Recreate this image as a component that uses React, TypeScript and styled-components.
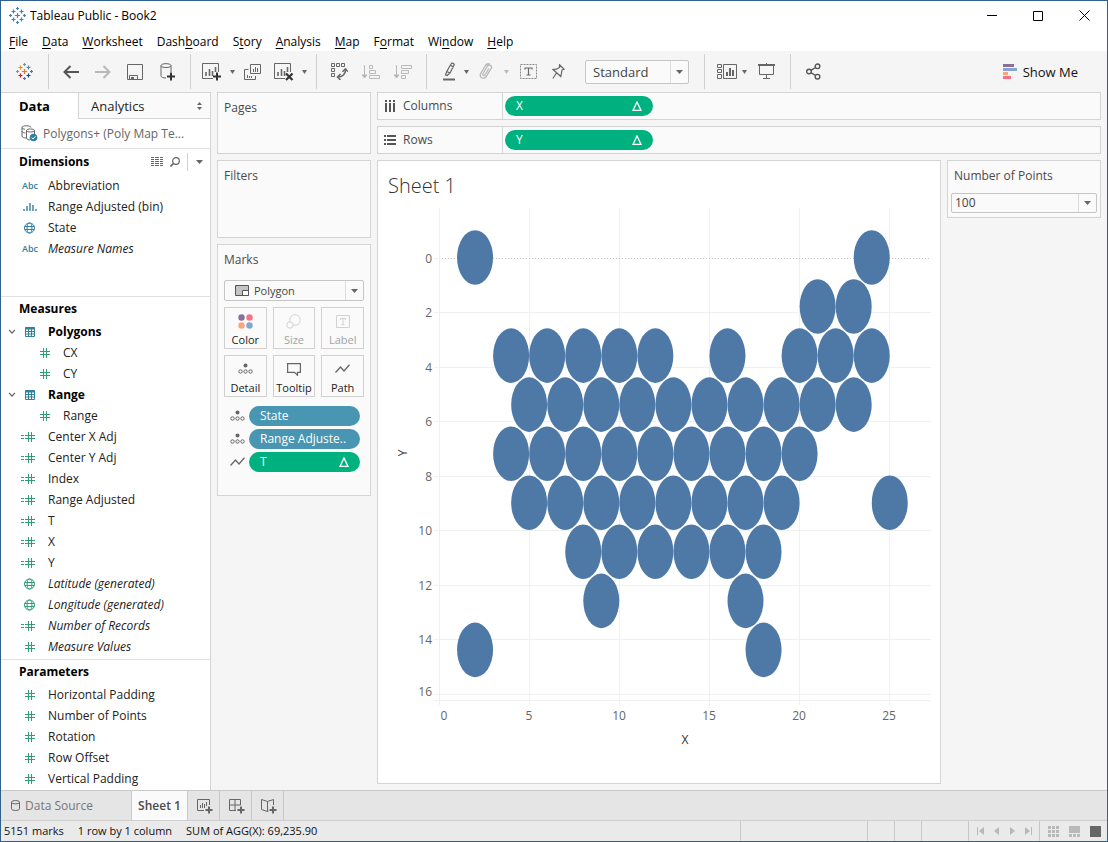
import React from 'react';
import styled, { createGlobalStyle, css } from 'styled-components';

const color = {
  frame: '#2f6190',
  line: '#d4d4d4',
  panel: '#fafafa',
  shell: '#f5f5f5',
  icon: '#666666',
  faint: '#b9b9b9',
  text: '#333333',
  blue: '#4996b2',
  green: '#00b180',
  dimension: '#31809f',
  measure: '#2f9e78',
  mark: '#4e79a7',
};

const GlobalStyle = createGlobalStyle`
  *, *::before, *::after { box-sizing: border-box; }
  body {
    margin: 0;
    font-family: "Open Sans", "Noto Sans", sans-serif;
    font-size: 12px;
    line-height: 16px;
    color: ${color.text};
    background: ${color.shell};
  }
  button, select { font: inherit; color: inherit; }
  svg { display: block; flex: none; }
`;

const plainButton = css`
  border: 0;
  padding: 0;
  background: none;
  display: flex;
  align-items: center;
  justify-content: center;
`;

/* ---------- window frame ---------- */

const Window = styled.div`
  min-height: 100vh;
  display: flex;
  flex-direction: column;
  border: 1px solid ${color.frame};
  background: ${color.shell};
`;

const TitleBar = styled.header`
  display: flex;
  align-items: center;
  height: 29px;
  padding-left: 8px;
  background: #fff;
`;

const WindowTitle = styled.h1`
  flex: 1;
  margin: 0 0 0 4px;
  font-size: 12px;
  font-weight: 400;
  color: #000;
`;

const CaptionButton = styled.button`
  ${plainButton}
  width: 46px;
  height: 29px;
`;

const MenuBar = styled.nav`
  display: flex;
  align-items: center;
  gap: 14px;
  height: 21px;
  padding: 2px 0 0 8px;
  background: #fff;
`;

const MenuItem = styled.button`
  ${plainButton}
  display: block;
  color: #000;
  u { text-underline-offset: 2px; }
`;

/* ---------- toolbar ---------- */

const Toolbar = styled.div`
  display: flex;
  align-items: center;
  height: 41px;
  padding-right: 29px;
`;

const ToolGroup = styled.div<{ $start?: number; $end?: number; $last?: boolean }>`
  display: flex;
  align-items: center;
  height: 35px;
  padding: 0 ${p => p.$end ?? 0}px 0 ${p => p.$start ?? 0}px;
  border-right: ${p => (p.$last ? 0 : 1)}px solid #cfcfcf;
`;

const ToolButton = styled.button<{ $width?: number }>`
  ${plainButton}
  width: ${p => p.$width ?? 32}px;
  height: 32px;
`;

const ShowMe = styled.button`
  ${plainButton}
  gap: 6px;
  margin-left: auto;
  font-size: 13px;
  color: #111;
`;

/* ---------- drop-downs ---------- */

const SelectFrame = styled.label<{ $height: number }>`
  display: flex;
  align-items: center;
  height: ${p => p.$height}px;
  padding-left: 3px;
  border: 1px solid #c6c6c6;
  border-radius: 2px;
  background: ${color.panel};
`;

const ToolSelectFrame = styled(SelectFrame)`
  width: 104px;
  margin-left: 15px;
  padding-left: 7px;
`;

const Select = styled.select<{ $size?: number }>`
  flex: 1;
  min-width: 0;
  height: 100%;
  padding: 0;
  border: 0;
  appearance: none;
  background: none;
  font-size: ${p => p.$size ?? 12}px;
  color: #444;
`;

const SelectArrow = styled.span`
  display: flex;
  align-items: center;
  justify-content: center;
  width: 18px;
  height: 100%;
  border-left: 1px solid #dcdcdc;
`;

/* ---------- data pane ---------- */

const Workspace = styled.div`
  flex: 1;
  display: grid;
  grid-template-columns: 210px 154px 1fr;
  column-gap: 6px;
  padding-right: 6px;
`;

const DataPane = styled.aside`
  border-top: 1px solid ${color.line};
  border-right: 1px solid ${color.line};
  background: #fff;
`;

const PaneTabs = styled.div`
  display: flex;
  height: 26px;
`;

const PaneTab = styled.button<{ $active?: boolean }>`
  ${plainButton}
  justify-content: space-between;
  font-size: 13px;
  color: ${p => (p.$active ? '#000' : '#222')};
  font-weight: ${p => (p.$active ? 700 : 400)};
  flex: ${p => (p.$active ? '0 0 77px' : '1')};
  padding: ${p => (p.$active ? '0 18px' : '0 8px 0 12px')};
  ${p =>
    !p.$active &&
    css`
      background: ${color.panel};
      border-left: 1px solid ${color.line};
      border-bottom: 1px solid ${color.line};
    `}
`;

const DataSourceRow = styled.div`
  display: flex;
  align-items: center;
  gap: 5px;
  height: 30px;
  padding-left: 20px;
  border-bottom: 1px solid #e2e2e2;
  color: #666;
`;

const FieldSection = styled.section<{ $height?: number; $divider?: boolean }>`
  min-height: ${p => (p.$height ? `${p.$height}px` : 'auto')};
  border-bottom: ${p => (p.$divider ? `1px solid #e2e2e2` : 0)};
`;

const SectionHeader = styled.div<{ $height?: number }>`
  display: flex;
  align-items: center;
  height: ${p => p.$height ?? 24}px;
  padding: 0 7px 0 18px;
`;

const SectionTitle = styled.h2`
  flex: 1;
  margin: 0;
  font-size: 12px;
  font-weight: 700;
  color: #000;
`;

const HeaderTools = styled.div`
  display: flex;
  align-items: center;
  gap: 7px;
  height: 18px;
`;

const HeaderButton = styled.button<{ $split?: boolean }>`
  ${plainButton}
  height: 18px;
  ${p =>
    p.$split &&
    css`
      padding-left: 8px;
      border-left: 1px solid #d0d0d0;
    `}
`;

const FieldList = styled.ul`
  margin: 0;
  padding: 0;
  list-style: none;
`;

const Field = styled.li<{ $folder?: boolean; $nested?: boolean; $generated?: boolean }>`
  display: flex;
  align-items: center;
  height: 21px;
  padding-left: ${p => (p.$nested ? 15 : 0)}px;
  color: ${p => (p.$folder ? '#000' : '#222')};
  font-weight: ${p => (p.$folder ? 700 : 400)};
  font-style: ${p => (p.$generated ? 'italic' : 'normal')};
`;

const FieldDisclosure = styled.span`
  display: flex;
  justify-content: center;
  width: 20px;
  padding-left: 2px;
`;

const FieldIcon = styled.span<{ $tint: string }>`
  display: flex;
  align-items: center;
  justify-content: center;
  width: 18px;
  margin-right: 9px;
  color: ${p => p.$tint};
  font-size: 9px;
  font-weight: 600;
  font-style: normal;
`;

/* ---------- shelves and cards ---------- */

const CardColumn = styled.div`
  display: flex;
  flex-direction: column;
  gap: 6px;
  padding-bottom: 6px;
`;

const Card = styled.section<{ $height: number }>`
  min-height: ${p => p.$height}px;
  padding: 7px 6px 0;
  border: 1px solid ${color.line};
  background: ${color.panel};
`;

const CardTitle = styled.h2`
  margin: 0;
  font-size: 12px;
  font-weight: 400;
  color: #4a4a4a;
`;

const MarkTypeRow = styled.div`
  margin-top: 12px;
`;

const MarkTypeIcon = styled.span`
  display: flex;
  margin: 0 5px 0 7px;
`;

const MarkGrid = styled.div`
  display: grid;
  grid-template-columns: repeat(3, 1fr);
  gap: 6px;
  margin-top: 6px;
`;

const MarkButton = styled.button`
  ${plainButton}
  flex-direction: column;
  justify-content: space-between;
  height: 42px;
  padding: 5px 0 0;
  border: 1px solid #d0d0d0;
  background: ${color.panel};
  font-size: 11px;
  color: #222;
  &:disabled { color: #a3a3a3; }
`;

const MarkIconBox = styled.span`
  display: flex;
  align-items: center;
  height: 16px;
`;

const Encodings = styled.ul`
  display: grid;
  gap: 3px;
  margin: 9px 4px 0 6px;
  padding: 0;
  list-style: none;
`;

const Encoding = styled.li`
  display: grid;
  grid-template-columns: 16px 1fr;
  column-gap: 3px;
  align-items: center;
`;

const Pill = styled.button<{ $fill: string; $width?: string }>`
  ${plainButton}
  justify-content: space-between;
  width: ${p => p.$width ?? 'auto'};
  height: 20px;
  padding: 0 11px;
  border-radius: 10px;
  background: ${p => p.$fill};
  color: #fff;
  white-space: nowrap;
`;

const Main = styled.main`
  display: flex;
  flex-direction: column;
  gap: 6px;
  padding-bottom: 6px;
  min-width: 0;
`;

const Shelf = styled.section`
  display: flex;
  height: 28px;
  border: 1px solid ${color.line};
  background: ${color.panel};
`;

const ShelfLabel = styled.h2`
  display: flex;
  align-items: center;
  gap: 7px;
  width: 125px;
  margin: 0;
  padding-left: 6px;
  border-right: 1px solid ${color.line};
  font-size: 12px;
  font-weight: 400;
  color: #4a4a4a;
`;

const ShelfDrop = styled.div`
  display: flex;
  align-items: center;
  flex: 1;
  padding-left: 2px;
`;

const ViewArea = styled.div`
  flex: 1;
  display: grid;
  grid-template-columns: 1fr 154px;
  column-gap: 6px;
  align-items: start;
`;

const Sheet = styled.section`
  align-self: stretch;
  border: 1px solid ${color.line};
  background: #fff;
`;

const SheetTitle = styled.h2`
  margin: 0;
  padding: 11px 10px 5px;
  font-size: 20px;
  line-height: 28px;
  font-weight: 300;
  color: #333;
`;

const Chart = styled.svg`
  width: 100%;
  height: auto;
  font-size: 12px;
  fill: #666;
`;

const ParameterCard = styled.section`
  display: grid;
  gap: 9px;
  padding: 7px 3px 4px;
  border: 1px solid ${color.line};
  background: ${color.panel};
`;

const ParameterTitle = styled(CardTitle)`
  padding-left: 3px;
`;

/* ---------- sheet tabs and status bar ---------- */

const SheetTabs = styled.div`
  display: flex;
  height: 31px;
  border-top: 1px solid #c8c8c8;
  border-bottom: 1px solid #cfcfcf;
  background: #e5e5e5;
`;

const SheetTab = styled.button<{ $width: number; $active?: boolean; $start?: number }>`
  ${plainButton}
  gap: 5px;
  width: ${p => p.$width}px;
  justify-content: ${p => (p.$start ? 'flex-start' : 'center')};
  padding-left: ${p => p.$start ?? 0}px;
  border-right: 1px solid #c8c8c8;
  color: ${p => (p.$active ? '#4a4a4a' : '#777')};
  background: ${p => (p.$active ? color.panel : 'none')};
  font-weight: ${p => (p.$active ? 600 : 400)};
`;

const NewTab = styled(SheetTab)`
  padding: 2px 0 0 2px;
`;

const StatusBar = styled.footer`
  display: flex;
  align-items: stretch;
  height: 20px;
  background: #eaeaea;
`;

const StatusText = styled.div`
  display: flex;
  align-items: center;
  flex: 1;
  gap: 14px;
  padding-left: 3px;
  font-size: 11px;
  color: #111;
`;

const StatusCell = styled.div<{ $width: number }>`
  display: flex;
  align-items: center;
  justify-content: space-between;
  width: ${p => p.$width}px;
  padding: 0 6px 0 8px;
  border-left: 1px solid #c8c8c8;
`;

const StatusButton = styled.button`
  ${plainButton}
`;

/* ---------- icons ---------- */

type IconProps = { w: number; h: number; stroke?: string; children: React.ReactNode };

const Icon = ({ w, h, stroke = color.icon, children }: IconProps) => (
  <svg width={w} height={h} viewBox={`0 0 ${w} ${h}`} fill="none" stroke={stroke} aria-hidden="true">
    {children}
  </svg>
);

const Caret = ({ size = 5, fill = color.icon }: { size?: number; fill?: string }) => (
  <svg width={size + 2} height={4} viewBox="0 0 8 4" preserveAspectRatio="none" aria-hidden="true">
    <path d="M0 0H8L4 4Z" fill={fill} />
  </svg>
);

const cross = (x: number, y: number, r: number) => `M${x - r} ${y}H${x + r}M${x} ${y - r}V${y + r}`;

const TableauLogo = ({ colors }: { colors: string[] }) => (
  <Icon w={17} h={17}>
    <g strokeWidth="1.2">
      <path stroke={colors[0]} d={cross(8.5, 8.5, 2.6)} />
      <path stroke={colors[1]} d={cross(4.5, 4.5, 2)} />
      <path stroke={colors[2]} d={cross(12.5, 4.5, 2)} />
      <path stroke={colors[3]} d={cross(4.5, 12.5, 2)} />
      <path stroke={colors[4]} d={cross(12.5, 12.5, 2)} />
      <path stroke={colors[5]} d={cross(8.5, 1.5, 1.5)} />
      <path stroke={colors[6]} d={cross(8.5, 15.5, 1.5)} />
      <path stroke={colors[5]} d={cross(1.5, 8.5, 1.5)} />
      <path stroke={colors[6]} d={cross(15.5, 8.5, 1.5)} />
    </g>
  </Icon>
);

const Arrow = ({ back }: { back?: boolean }) => (
  <Icon w={16} h={14} stroke={back ? '#555' : color.faint}>
    <path strokeWidth="2" d={back ? 'M16 7H1.5M7.5 1L1.5 7L7.5 13' : 'M0 7H14.5M8.5 1L14.5 7L8.5 13'} />
  </Icon>
);

const SaveIcon = () => (
  <Icon w={16} h={16}>
    <path d="M.5 .5H15.5V15.5H.5ZM2.5 15V11.5H10.5V15" />
    <path d="M4 13H7V15.5H4Z" fill={color.icon} stroke="none" />
  </Icon>
);

const AddDataIcon = () => (
  <Icon w={15} h={18}>
    <ellipse cx="6" cy="2.6" rx="5" ry="2" />
    <path d="M1 2.6V12.8C1 14.2 3 15 6 15M11 2.6V9" />
    <path stroke="#333" strokeWidth="2" d="M11 9.5V17.5M7 13.5H15" />
  </Icon>
);

const WorksheetIcon = ({ clear }: { clear?: boolean }) => (
  <Icon w={20} h={18}>
    <path d="M16.5 9V.5H.5V15.5H11" />
    <path strokeWidth="1.6" d="M4 9V13M7.5 6V13M10.5 8V13M13.5 4V9" />
    {clear ? (
      <path stroke="#333" strokeWidth="2.2" d="M12 10.5L18.5 17M18.5 10.5L12 17" />
    ) : (
      <path stroke="#333" strokeWidth="2" d="M15 9.5V17.5M11 13.5H19" />
    )}
  </Icon>
);

const DuplicateIcon = () => (
  <Icon w={17} h={16}>
    <path d="M6.5 .5H16.5V9.5H6.5ZM9.5 5V8M11.5 3V8M13.5 4V8" />
    <path d="M4.5 5.5H.5V15.5H11.5V12M3.5 11V14M5.5 12V14M7.5 12V14" />
  </Icon>
);

const SwapIcon = () => (
  <Icon w={17} h={17}>
    <path d="M.5 .5H3.500V3.500H.5ZM5.500 .5H8.500V3.500H5.500ZM10.500 .5H13.500V3.500H10.500ZM.5 5.500H3.500V8.500H.5ZM.5 10.500H3.500V13.500H.5Z" />
    <path strokeWidth="1.5" d="M14.500 7C14.500 11 11.500 14 7 14" />
    <path strokeWidth="1.5" d="M11.500 8.800L14.500 5.800L17 8.800M9.500 11L6.500 14L9.500 17" />
  </Icon>
);

const SortIcon = ({ descending }: { descending?: boolean }) => (
  <Icon w={18} h={16} stroke={color.faint}>
    <path d="M2.500 1V14M0 11L2.500 14L5 11Z" fill={color.faint} />
    {descending ? (
      <path d="M7.500 1.500H17.500V4.500H7.500ZM7.500 6.500H14.500V9.500H7.500ZM7.500 11.500H11.500V14.500H7.500Z" />
    ) : (
      <path d="M7.500 1.500H10.500V4.500H7.500ZM7.500 6.500H13.500V9.500H7.500ZM7.500 11.500H17.500V14.500H7.500Z" />
    )}
  </Icon>
);

const HighlightIcon = () => (
  <Icon w={13} h={19}>
    <path d="M8.5 1.2Q10.5 .5 11.3 2.500L7 11L3.800 9.500ZM3.800 9.500L2.500 13L4 13.500L7 11M8 3.500L10.500 5" strokeWidth="1.2" />
    <path d="M0 17.500H12" strokeWidth="2" />
  </Icon>
);

const ClipIcon = () => (
  <Icon w={14} h={17} stroke={color.faint}>
    <path
      strokeWidth="1.3"
      d="M4 10.5L8.5 3C10 1 13.5 2.5 12.3 5.2L7.2 13.7C5 17 0 14.8 1.5 10.8L5.7 3.800C7 1 9.500 .5 11 1M9.800 5.500L6 12C5 13.300 3.300 12.500 4 10.500"
    />
  </Icon>
);

const TextBoxIcon = ({ faint }: { faint?: boolean }) =>
  faint ? (
    <Icon w={14} h={13} stroke="#d2d2d2">
      <path d="M.5 .5H13.5V12.5H.5ZM4.5 5V3.5H9.5V5M7 3.5V9.5M5.5 9.5H8.5" />
    </Icon>
  ) : (
    <Icon w={17} h={15}>
      <path d="M.5 .5H16.5V14.5H.5Z" strokeDasharray="2 1" stroke="#888" />
      <path strokeWidth="1.2" d="M5 5.5V4H12V5.5M8.5 4V11M6.5 11H10.5" />
    </Icon>
  );

const PinIcon = () => (
  <Icon w={13} h={16}>
    <path strokeWidth="1.2" d="M7.5 .8L12.2 5.200L10 6L9.500 9L8.800 12.500L1 5.500L4.500 5.200L7.500 3.500ZM4.500 9L.8 14.500" />
  </Icon>
);

const CardsIcon = () => (
  <Icon w={20} h={15}>
    <path d="M.5 .5H4.5V3.5H.5ZM.5 5.5H4.5V8.500H.5ZM.5 10.500H4.500V14.500H.5ZM6.500 .5H19.500V14.500H6.500Z" />
    <path strokeWidth="2" d="M10 8V12M13 4V12M16 6V12" />
  </Icon>
);

const PresentIcon = () => (
  <Icon w={17} h={17}>
    <path d="M1.5 2V11.5H15.5V2M8.5 0V2M8.5 11.5V15.5M5 15.5H12" />
    <path strokeWidth="2" d="M0 2H17" />
  </Icon>
);

const ShareIcon = () => (
  <Icon w={15} h={17} stroke="#555">
    <g strokeWidth="1.4">
      <circle cx="3" cy="8.5" r="2.3" />
      <circle cx="11.5" cy="3.3" r="2.3" />
      <circle cx="11.5" cy="13.7" r="2.3" />
      <path d="M5 7.3L9.5 4.5M5 9.7L9.5 12.5" />
    </g>
  </Icon>
);

const ShowMeIcon = () => (
  <Icon w={14} h={15} stroke="none">
    <path fill="#8b6f9b" d="M0 0H11V3H0Z" />
    <path fill="#83a5d0" d="M0 4H14V7H0Z" />
    <path fill="#fca57a" d="M0 8H5V11H0Z" />
    <path fill="#f77181" d="M0 12H8V15H0Z" />
  </Icon>
);

const DatabaseIcon = () => (
  <Icon w={17} h={17}>
    <path d="M10 2.5C10 .2 1 .2 1 2.5V11C1 12.3 3 13 5 13M1 6C1 7.5 3 8 4.5 8M1 2.5C1 3.5 2.5 4.2 4 4.2" />
    <path d="M13.5 5.5C13.5 3.5 5.5 3.5 5.5 5.5V13C5.5 14.5 8 15 9 15M13.5 5.5V9M5.5 5.5C5.5 7.5 13.5 7.5 13.5 5.5" />
    <circle cx="12.5" cy="12.5" r="3.8" fill="#31809f" stroke="none" />
    <path d="M10.7 12.6L12 14L14.4 11.3" stroke="#fff" />
  </Icon>
);

const ListIcon = () => (
  <Icon w={12} h={10}>
    <path d="M0 .5H12M0 2.5H12M0 4.5H12M0 6.5H12M0 8.5H12" strokeDasharray="3 1 4 1 3 0" />
  </Icon>
);

const SearchIcon = () => (
  <Icon w={10} h={10}>
    <circle cx="6" cy="4" r="3.3" strokeWidth="1.2" />
    <path d="M3.7 6.3L.5 9.5" strokeWidth="1.6" />
  </Icon>
);

const Delta = () => (
  <Icon w={10} h={10} stroke="#fff">
    <path d="M5 1L9 9.4H1Z" strokeWidth="1.3" />
  </Icon>
);

const DetailIcon = () => (
  <Icon w={15} h={12}>
    <circle cx="7.5" cy="2.5" r="2" fill={color.icon} stroke="none" />
    <circle cx="2.5" cy="8.5" r="1.7" />
    <circle cx="7.5" cy="8.5" r="1.7" />
    <circle cx="12.5" cy="8.5" r="1.7" />
  </Icon>
);

const PathIcon = () => (
  <Icon w={15} h={10}>
    <path d="M.5 8.5L5.5 3L9 7L14.5 .8" strokeWidth="1.3" />
  </Icon>
);

const ColorIcon = () => (
  <Icon w={15} h={15} stroke="none">
    <circle cx="3.5" cy="3.5" r="3.2" fill="#8b6f9b" />
    <circle cx="11.5" cy="3.5" r="3.2" fill="#f77181" />
    <circle cx="3.5" cy="11.5" r="3.2" fill="#fca57a" />
    <circle cx="11.5" cy="11.5" r="3.2" fill="#83a5d0" />
  </Icon>
);

const SizeIcon = () => (
  <Icon w={15} h={15} stroke="#d2d2d2">
    <circle cx="9" cy="6" r="5.3" />
    <circle cx="4" cy="11" r="3.2" fill={color.panel} />
  </Icon>
);

const TooltipIcon = () => (
  <Icon w={14} h={13}>
    <path strokeWidth="1.2" d="M.6 .6H13.4V9.4H10.5V12.3L7.5 9.4H.6Z" />
  </Icon>
);

const PolygonIcon = () => (
  <Icon w={14} h={11} stroke="#555">
    <path d="M.5 .5H13.5V10.5H.5Z" fill="#c4c4c4" />
    <path d="M7.5 5.5H13.5V10.5H7.5Z" fill="#fff" />
  </Icon>
);

const ColumnsIcon = () => (
  <Icon w={12} h={13} stroke="#555">
    <path strokeWidth="2" d="M2 0V2M2 3V12M6 0V2M6 3V12M10 0V2M10 3V12" />
  </Icon>
);

const RowsIcon = () => (
  <Icon w={12} h={12} stroke="#555">
    <path strokeWidth="2" d="M0 2H2M3 2H12M0 6H2M3 6H12M0 10H2M3 10H12" />
  </Icon>
);

type Kind = 'abc' | 'bin' | 'globe' | 'table' | 'number' | 'calc';

const FieldGlyph = ({ kind }: { kind: Kind }) => {
  switch (kind) {
    case 'abc':
      return <span>Abc</span>;
    case 'bin':
      return (
        <Icon w={14} h={9} stroke="currentColor">
          <path strokeWidth="1.4" d="M1 7V9M4 4V9M7 1V9M10 3V9M13 7V9" />
        </Icon>
      );
    case 'globe':
      return (
        <Icon w={12} h={12} stroke="currentColor">
          <circle cx="5.5" cy="6" r="5" />
          <ellipse cx="5.5" cy="6" rx="2.4" ry="5" />
          <path d="M.8 4.5H10.2M.8 7.5H10.2" />
        </Icon>
      );
    case 'table':
      return (
        <Icon w={10} h={10} stroke="currentColor">
          <path d="M.5 .5H9.5V9.500H.5ZM0 4.500H10M0 7H10M3.500 2V10M6.500 2V10" />
          <path strokeWidth="2" d="M0 1.500H10" />
        </Icon>
      );
    case 'calc':
      return (
        <Icon w={18} h={10} stroke="currentColor">
          <path d="M4 3.5H14M4 6.5H14M7.5 0V10M10.5 0V10M0 3.5H3M0 6.5H3" />
        </Icon>
      );
    default:
      return (
        <Icon w={10} h={10} stroke="currentColor">
          <path d="M0 3.5H10M0 6.5H10M3.5 0V10M6.5 0V10" />
        </Icon>
      );
  }
};

const Chevron = () => (
  <Icon w={8} h={5}>
    <path d="M1 .8L4 4L7 .8" strokeWidth="1.2" />
  </Icon>
);

const NewTabIcon = ({ kind }: { kind: 'sheet' | 'dashboard' | 'story' }) => (
  <Icon w={16} h={15}>
    {kind === 'sheet' && <path d="M12.5 6V.5H.5V11.5H7M3.5 6V9M5.5 4V9M7.5 5V9M9.5 3V7" />}
    {kind === 'dashboard' && <path d="M11.5 6V.5H.5V11.5H7M6 .5V11.5M.5 6H11.5" />}
    {kind === 'story' && <path d="M6.5 2.5L.5 .5V10.5L6.5 12.5L7.5 12M6.5 2.5L12.5 .5V6M6.5 2.5V12.5" />}
    <path strokeWidth="2" d="M12 7.5V14.5M8.5 11H15.5" />
  </Icon>
);

const CylinderIcon = () => (
  <Icon w={9} h={11}>
    <path d="M.5 2.2V8.8C.5 11 8.5 11 8.5 8.8V2.2" />
    <ellipse cx="4.5" cy="2.2" rx="4" ry="1.7" />
  </Icon>
);

/* ---------- fields ---------- */

type FieldItem = { name: string; kind: Kind; folder?: boolean; nested?: boolean; generated?: boolean };

const dimensions: FieldItem[] = [
  { name: 'Abbreviation', kind: 'abc' },
  { name: 'Range Adjusted (bin)', kind: 'bin' },
  { name: 'State', kind: 'globe' },
  { name: 'Measure Names', kind: 'abc', generated: true },
];

const measures: FieldItem[] = [
  { name: 'Polygons', kind: 'table', folder: true },
  { name: 'CX', kind: 'number', nested: true },
  { name: 'CY', kind: 'number', nested: true },
  { name: 'Range', kind: 'table', folder: true },
  { name: 'Range', kind: 'number', nested: true },
  { name: 'Center X Adj', kind: 'calc' },
  { name: 'Center Y Adj', kind: 'calc' },
  { name: 'Index', kind: 'calc' },
  { name: 'Range Adjusted', kind: 'calc' },
  { name: 'T', kind: 'calc' },
  { name: 'X', kind: 'calc' },
  { name: 'Y', kind: 'calc' },
  { name: 'Latitude (generated)', kind: 'globe', generated: true },
  { name: 'Longitude (generated)', kind: 'globe', generated: true },
  { name: 'Number of Records', kind: 'calc', generated: true },
  { name: 'Measure Values', kind: 'number', generated: true },
];

const parameters: FieldItem[] = [
  'Horizontal Padding',
  'Number of Points',
  'Rotation',
  'Row Offset',
  'Vertical Padding',
].map(name => ({ name, kind: 'number' as Kind }));

const Fields = ({ items, tint }: { items: FieldItem[]; tint: string }) => (
  <FieldList>
    {items.map((f, i) => (
      <Field key={i} $folder={f.folder} $nested={f.nested} $generated={f.generated}>
        <FieldDisclosure>{f.folder && <Chevron />}</FieldDisclosure>
        <FieldIcon $tint={f.folder ? color.dimension : tint}>
          <FieldGlyph kind={f.kind} />
        </FieldIcon>
        {f.name}
      </Field>
    ))}
  </FieldList>
);

/* ---------- chart ---------- */

const range = (from: number, to: number) =>
  Array.from({ length: (to - from) / 2 + 1 }, (_, i) => from + i * 2);

const rows: number[][] = [
  [2, 24],
  [21, 23],
  [...range(4, 12), 16, 20, 22, 24],
  range(5, 23),
  range(4, 20),
  [...range(5, 19), 25],
  range(8, 18),
  [9, 17],
  [2, 18],
];

const sx = (v: number) => 61 + v * 18.03;
const sy = (v: number) => 53 + v * 27.25;
const crisp = (v: number) => Math.floor(v) + 0.5;

const PolygonChart = () => (
  <Chart viewBox="0 0 562 560" role="img" aria-label="Y by X">
    <g stroke="#f0f0f0">
      {[0, 5, 10, 15, 20, 25].map(v => (
        <path key={v} d={`M${crisp(sx(v))} 3V500`} />
      ))}
      {[2, 4, 6, 8, 10, 12, 14, 16].map(v => (
        <path key={v} d={`M56 ${crisp(sy(v))}H553`} />
      ))}
      <path d="M56 53.5H61M56 495.5H553" />
    </g>
    <path d="M64 53.5H552" stroke="#c4c4c4" strokeDasharray="1 2" />
    {rows.map((xs, r) =>
      xs.map(x => (
        <ellipse key={`${r}-${x}`} cx={sx(x)} cy={sy(r * 1.8) - 0.5} rx="18" ry="27.3" fill={color.mark} />
      )),
    )}
    <g textAnchor="end">
      {[0, 2, 4, 6, 8, 10, 12, 14, 16].map(v => (
        <text key={v} x="54" y={Math.min(Math.floor(sy(v)) + 5, 491)}>
          {v}
        </text>
      ))}
    </g>
    <g textAnchor="middle">
      {[0, 5, 10, 15, 20, 25].map(v => (
        <text key={v} x={Math.max(Math.floor(sx(v)), 66)} y="515">
          {v}
        </text>
      ))}
      <text x="307" y="539" fill="#333">
        X
      </text>
      <text transform="translate(29 248) rotate(-90)" fill="#333">
        Y
      </text>
    </g>
  </Chart>
);

/* ---------- menus ---------- */

const menus: [string, string, string][] = [
  ['', 'F', 'ile'],
  ['', 'D', 'ata'],
  ['', 'W', 'orksheet'],
  ['Dash', 'b', 'oard'],
  ['S', 't', 'ory'],
  ['', 'A', 'nalysis'],
  ['', 'M', 'ap'],
  ['F', 'o', 'rmat'],
  ['Wi', 'n', 'dow'],
  ['', 'H', 'elp'],
];

const appColors = ['#e8762d', '#eb912b', '#59879b', '#c72035', '#1f457e', '#7099a5', '#6b6aa0'];
const blueColors = Array(7).fill('#3a85b5');

export default function App() {
  return (
    <>
      <GlobalStyle />
      <Window>
        <TitleBar>
          <TableauLogo colors={blueColors} />
          <WindowTitle>Tableau Public - Book2</WindowTitle>
          <CaptionButton aria-label="Minimize">
            <Icon w={10} h={11} stroke="#000"><path d="M0 5.5H10" /></Icon>
          </CaptionButton>
          <CaptionButton aria-label="Maximize">
            <Icon w={10} h={10} stroke="#000"><path d="M.5 .5H9.5V9.5H.5Z" /></Icon>
          </CaptionButton>
          <CaptionButton aria-label="Close">
            <Icon w={11} h={11} stroke="#000"><path d="M.5 .5L10.5 10.5M10.5 .5L.5 10.5" /></Icon>
          </CaptionButton>
        </TitleBar>

        <MenuBar>
          {menus.map(([before, key, after]) => (
            <MenuItem key={before + key + after}>
              {before}
              <u>{key}</u>
              {after}
            </MenuItem>
          ))}
        </MenuBar>

        <Toolbar>
          <ToolGroup $start={7} $end={8}>
            <ToolButton aria-label="Start page"><TableauLogo colors={appColors} /></ToolButton>
          </ToolGroup>
          <ToolGroup $start={6} $end={7}>
            <ToolButton aria-label="Undo"><Arrow back /></ToolButton>
            <ToolButton aria-label="Redo"><Arrow /></ToolButton>
            <ToolButton aria-label="Save"><SaveIcon /></ToolButton>
            <ToolButton aria-label="New data source"><AddDataIcon /></ToolButton>
          </ToolGroup>
          <ToolGroup $start={5} $end={8}>
            <ToolButton aria-label="New worksheet"><WorksheetIcon /></ToolButton>
            <ToolButton $width={8} aria-label="New worksheet options"><Caret size={3} /></ToolButton>
            <ToolButton aria-label="Duplicate"><DuplicateIcon /></ToolButton>
            <ToolButton aria-label="Clear sheet"><WorksheetIcon clear /></ToolButton>
            <ToolButton $width={8} aria-label="Clear options"><Caret size={3} /></ToolButton>
          </ToolGroup>
          <ToolGroup $start={6} $end={7}>
            <ToolButton aria-label="Swap rows and columns"><SwapIcon /></ToolButton>
            <ToolButton aria-label="Sort ascending"><SortIcon /></ToolButton>
            <ToolButton aria-label="Sort descending"><SortIcon descending /></ToolButton>
          </ToolGroup>
          <ToolGroup $start={9} $end={15}>
            <ToolButton $width={26} aria-label="Highlight"><HighlightIcon /></ToolButton>
            <ToolButton $width={8} aria-label="Highlight options"><Caret size={3} /></ToolButton>
            <ToolButton aria-label="Group members"><ClipIcon /></ToolButton>
            <ToolButton $width={8} aria-label="Group options"><Caret size={3} fill={color.faint} /></ToolButton>
            <ToolButton $width={36} aria-label="Show mark labels"><TextBoxIcon /></ToolButton>
            <ToolButton $width={24} aria-label="Fix axes"><PinIcon /></ToolButton>
            <ToolSelectFrame $height={24}>
              <Select $size={13} aria-label="Fit" defaultValue="Standard">
                <option>Standard</option>
                <option>Fit Width</option>
                <option>Fit Height</option>
                <option>Entire View</option>
              </Select>
              <SelectArrow><Caret /></SelectArrow>
            </ToolSelectFrame>
          </ToolGroup>
          <ToolGroup $start={9} $end={6}>
            <ToolButton $width={26} aria-label="Show or hide cards"><CardsIcon /></ToolButton>
            <ToolButton $width={8} aria-label="Card options"><Caret size={3} /></ToolButton>
            <ToolButton $width={36} aria-label="Presentation mode"><PresentIcon /></ToolButton>
          </ToolGroup>
          <ToolGroup $start={6} $last>
            <ToolButton aria-label="Share"><ShareIcon /></ToolButton>
          </ToolGroup>
          <ShowMe><ShowMeIcon />Show Me</ShowMe>
        </Toolbar>

        <Workspace>
          <DataPane>
            <PaneTabs>
              <PaneTab $active>Data</PaneTab>
              <PaneTab>
                Analytics
                <Icon w={5} h={8} stroke="none">
                  <path fill={color.icon} d="M0 3L2.5 0L5 3ZM0 5L2.5 8L5 5Z" />
                </Icon>
              </PaneTab>
            </PaneTabs>
            <DataSourceRow><DatabaseIcon />Polygons+ (Poly Map Te...</DataSourceRow>
            <FieldSection $height={148} $divider>
              <SectionHeader $height={26}>
                <SectionTitle>Dimensions</SectionTitle>
                <HeaderTools>
                  <HeaderButton aria-label="View data"><ListIcon /></HeaderButton>
                  <HeaderButton aria-label="Find field"><SearchIcon /></HeaderButton>
                  <HeaderButton $split aria-label="Pane options"><Caret /></HeaderButton>
                </HeaderTools>
              </SectionHeader>
              <Fields items={dimensions} tint={color.dimension} />
            </FieldSection>
            <FieldSection $height={363} $divider>
              <SectionHeader><SectionTitle>Measures</SectionTitle></SectionHeader>
              <Fields items={measures} tint={color.measure} />
            </FieldSection>
            <FieldSection>
              <SectionHeader><SectionTitle>Parameters</SectionTitle></SectionHeader>
              <Fields items={parameters} tint={color.measure} />
            </FieldSection>
          </DataPane>

          <CardColumn>
            <Card $height={62}><CardTitle>Pages</CardTitle></Card>
            <Card $height={78}><CardTitle>Filters</CardTitle></Card>
            <Card $height={252}>
              <CardTitle>Marks</CardTitle>
              <MarkTypeRow>
                <SelectFrame $height={21}>
                  <MarkTypeIcon><PolygonIcon /></MarkTypeIcon>
                  <Select $size={11} aria-label="Mark type" defaultValue="Polygon">
                    <option>Automatic</option>
                    <option>Polygon</option>
                  </Select>
                  <SelectArrow><Caret /></SelectArrow>
                </SelectFrame>
              </MarkTypeRow>
              <MarkGrid>
                <MarkButton><MarkIconBox><ColorIcon /></MarkIconBox>Color</MarkButton>
                <MarkButton disabled><MarkIconBox><SizeIcon /></MarkIconBox>Size</MarkButton>
                <MarkButton disabled><MarkIconBox><TextBoxIcon faint /></MarkIconBox>Label</MarkButton>
                <MarkButton><MarkIconBox><DetailIcon /></MarkIconBox>Detail</MarkButton>
                <MarkButton><MarkIconBox><TooltipIcon /></MarkIconBox>Tooltip</MarkButton>
                <MarkButton><MarkIconBox><PathIcon /></MarkIconBox>Path</MarkButton>
              </MarkGrid>
              <Encodings>
                <Encoding><DetailIcon /><Pill $fill={color.blue}>State</Pill></Encoding>
                <Encoding><DetailIcon /><Pill $fill={color.blue}>Range Adjuste..</Pill></Encoding>
                <Encoding><PathIcon /><Pill $fill={color.green}>T<Delta /></Pill></Encoding>
              </Encodings>
            </Card>
          </CardColumn>

          <Main>
            <Shelf>
              <ShelfLabel><ColumnsIcon />Columns</ShelfLabel>
              <ShelfDrop><Pill $fill={color.green} $width="148px">X<Delta /></Pill></ShelfDrop>
            </Shelf>
            <Shelf>
              <ShelfLabel><RowsIcon />Rows</ShelfLabel>
              <ShelfDrop><Pill $fill={color.green} $width="148px">Y<Delta /></Pill></ShelfDrop>
            </Shelf>
            <ViewArea>
              <Sheet>
                <SheetTitle>Sheet 1</SheetTitle>
                <PolygonChart />
              </Sheet>
              <ParameterCard>
                <ParameterTitle>Number of Points</ParameterTitle>
                <SelectFrame $height={20}>
                  <Select aria-label="Number of Points" defaultValue="100">
                    <option>50</option>
                    <option>100</option>
                  </Select>
                  <SelectArrow><Caret /></SelectArrow>
                </SelectFrame>
              </ParameterCard>
            </ViewArea>
          </Main>
        </Workspace>

        <SheetTabs>
          <SheetTab $width={131} $start={10}><CylinderIcon />Data Source</SheetTab>
          <SheetTab $width={56} $active>Sheet 1</SheetTab>
          <NewTab $width={32} aria-label="New worksheet tab"><NewTabIcon kind="sheet" /></NewTab>
          <NewTab $width={32} aria-label="New dashboard tab"><NewTabIcon kind="dashboard" /></NewTab>
          <NewTab $width={32} aria-label="New story tab"><NewTabIcon kind="story" /></NewTab>
        </SheetTabs>

        <StatusBar>
          <StatusText>
            <span>5151 marks</span>
            <span>1 row by 1 column</span>
            <span>SUM of AGG(X): 69,235.90</span>
          </StatusText>
          <StatusCell $width={127} />
          <StatusCell $width={27} />
          <StatusCell $width={27} />
          <StatusCell $width={47} />
          <StatusCell $width={71}>
            <StatusButton aria-label="First sheet"><Icon w={8} h={8} stroke="none"><path fill={color.faint} d="M0 0H1V8H0ZM7 0V8L2 4Z" /></Icon></StatusButton>
            <StatusButton aria-label="Previous sheet"><Icon w={8} h={8} stroke="none"><path fill={color.faint} d="M6 0V8L1 4Z" /></Icon></StatusButton>
            <StatusButton aria-label="Next sheet"><Icon w={8} h={8} stroke="none"><path fill={color.faint} d="M1 0V8L6 4Z" /></Icon></StatusButton>
            <StatusButton aria-label="Last sheet"><Icon w={8} h={8} stroke="none"><path fill={color.faint} d="M6 0H7V8H6ZM0 0V8L5 4Z" /></Icon></StatusButton>
          </StatusCell>
          <StatusCell $width={68}>
            <StatusButton aria-label="Sheet sorter">
              <Icon w={11} h={11} stroke="none">
                <path fill={color.faint} d="M0 0H3V3H0ZM4 0H7V3H4ZM8 0H11V3H8ZM0 4H3V7H0ZM4 4H7V7H4ZM8 4H11V7H8ZM0 8H3V11H0ZM4 8H7V11H4ZM8 8H11V11H8Z" />
              </Icon>
            </StatusButton>
            <StatusButton aria-label="Filmstrip">
              <Icon w={11} h={11} stroke="none">
                <path fill={color.faint} d="M0 0H11V7H0ZM0 8H3V11H0ZM4 8H7V11H4ZM8 8H11V11H8Z" />
              </Icon>
            </StatusButton>
            <StatusButton aria-label="Tabs">
              <Icon w={11} h={11} stroke="none"><path fill="#666" d="M0 0H11V11H0Z" /></Icon>
            </StatusButton>
          </StatusCell>
        </StatusBar>
      </Window>
    </>
  );
}
